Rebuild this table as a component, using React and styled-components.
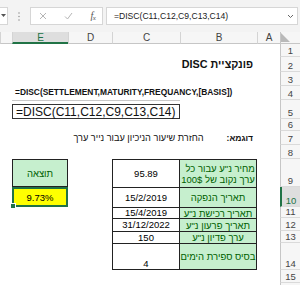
import React from "react";
import styled, { createGlobalStyle } from "styled-components";

const GlobalStyle = createGlobalStyle`
  html, body {
    margin: 0;
    padding: 0;
    background: #fff;
  }
  body {
    font-family: "Liberation Sans", "DejaVu Sans", Arial, sans-serif;
    width: 300px;
    height: 285px;
    overflow: hidden;
  }
`;

const Frame = styled.div`
  width: 300px;
  height: 285px;
  overflow: hidden;
  background: #fff;
`;

const FormulaBar = styled.div`
  height: 32px;
  box-sizing: border-box;
  padding-top: 7px;
  background: #f3f3f3;
  display: flex;
  align-items: flex-start;
`;

const NameBox = styled.div`
  width: 8px;
  height: 18px;
  box-sizing: border-box;
  background: #fff;
  border: 1px solid #d6d6d6;
  border-left: none;
  display: flex;
  align-items: center;
  padding-left: 1px;
`;

const Grip = styled.div`
  width: 22px;
  height: 18px;
  display: flex;
  align-items: center;
  justify-content: center;
`;

const ActionBox = styled.div`
  width: 73px;
  height: 18px;
  box-sizing: border-box;
  background: #fff;
  border: 1px solid #d6d6d6;
  display: flex;
  align-items: center;
  gap: 15px;
  padding-left: 7px;
`;

const ActionIcon = styled.span`
  width: 10px;
  display: flex;
  justify-content: center;
  align-items: center;
`;

const Fx = styled.span`
  font-family: "Liberation Serif", serif;
  font-style: italic;
  font-size: 10px;
  color: #555;
  letter-spacing: -0.5px;
  sub {
    font-size: 7px;
    vertical-align: -1px;
  }
`;

const FormulaInput = styled.div`
  width: 192px;
  height: 18px;
  margin-left: 3px;
  box-sizing: border-box;
  background: #fff;
  border: 1px solid #d6d6d6;
  display: flex;
  align-items: center;
  justify-content: space-between;
  padding: 0 3px 0 7px;
  font-size: 8.6px;
  color: #222;
`;

const Sheet = styled.div`
  display: grid;
  direction: rtl;
  grid-template-columns: 20px 23px 77px 68px 44px 56px 12px;
  grid-template-rows: 12px 13px 15px 14px 14px 19px 12px 14px 14px 28px 20px 11px 13px 12px 27px 13px 13px;
  background: #fff;
`;

const ColHead = styled.div`
  grid-row: 1;
  grid-column: ${(p) => p.$col};
  box-sizing: border-box;
  background: ${(p) => (p.$sel ? "#dedede" : "#f6f6f6")};
  color: ${(p) => (p.$sel ? "#217346" : "#444")};
  border-left: 1px solid #d4d4d4;
  border-bottom: ${(p) => (p.$sel ? "2px solid #217346" : "1px solid #c6c6c6")};
  font-size: 10px;
  display: flex;
  align-items: center;
  justify-content: center;
`;

const Corner = styled.div`
  grid-row: 1;
  grid-column: 1;
  box-sizing: border-box;
  background: #f6f6f6;
  border-left: 1px solid #c6c6c6;
  border-bottom: 1px solid #c6c6c6;
  display: flex;
  align-items: flex-end;
  justify-content: flex-end;
  padding: 0 7px 1px 0;
`;

const RowNum = styled.div`
  grid-column: 1;
  grid-row: ${(p) => p.$r + 1};
  box-sizing: border-box;
  background: ${(p) => (p.$sel ? "#dedede" : "#f6f6f6")};
  color: ${(p) => (p.$sel ? "#217346" : "#444")};
  border-bottom: 1px solid #dadada;
  border-left: ${(p) => (p.$sel ? "2px solid #217346" : "1px solid #c6c6c6")};
  font-size: 9.5px;
  line-height: 1;
  display: flex;
  align-items: flex-end;
  justify-content: center;
  padding-bottom: 1px;
`;

const TitleCell = styled.div`
  grid-row: 3;
  grid-column: 3 / 7;
  direction: rtl;
  display: flex;
  align-items: flex-end;
  padding: 0 4px 2px 0;
  font-size: 10.8px;
  font-weight: bold;
  color: #111;
  white-space: nowrap;
`;

const SyntaxCell = styled.div`
  grid-row: 5;
  grid-column: 3 / 7;
  direction: ltr;
  display: flex;
  align-items: flex-end;
  padding: 0 0 3px 3px;
  font-size: 8.4px;
  font-weight: bold;
  color: #111;
  white-space: nowrap;
`;

const FormulaBoxCell = styled.div`
  grid-row: 6;
  grid-column: 4 / 7;
  direction: ltr;
  border-top: 1px solid #c8c8c8;
  display: flex;
  align-items: flex-end;
`;

const FormulaBox = styled.div`
  width: 100%;
  height: 15px;
  box-sizing: border-box;
  border: 1.5px solid #333;
  display: flex;
  align-items: center;
  padding-left: 3px;
  font-size: 12px;
  color: #111;
  white-space: nowrap;
`;

const ExampleCell = styled.div`
  grid-row: 8;
  grid-column: 3 / 7;
  direction: rtl;
  display: flex;
  align-items: center;
  gap: 23px;
  padding-right: 4px;
  font-size: 9.2px;
  color: #111;
  white-space: nowrap;
`;

const ExampleLabel = styled.span`
  font-weight: bold;
  font-size: 8.5px;
`;

const ResultHead = styled.div`
  grid-row: 10;
  grid-column: 6;
  box-sizing: border-box;
  background: #c6efce;
  border: 1px solid #222;
  color: #006100;
  font-size: 9.5px;
  display: flex;
  align-items: center;
  justify-content: center;
`;

const ResultValue = styled.div`
  grid-row: 11;
  grid-column: 6;
  position: relative;
  box-sizing: border-box;
  background: #ffff00;
  border: 2px solid #217346;
  color: #000;
  font-size: 9.5px;
  display: flex;
  align-items: center;
  justify-content: center;
`;

const FillHandle = styled.span`
  position: absolute;
  left: -4px;
  bottom: -4px;
  width: 4px;
  height: 4px;
  background: #217346;
  border: 1px solid #fff;
`;

const CalcTable = styled.div`
  grid-row: 10 / 16;
  grid-column: 3 / 5;
  align-self: start;
  display: grid;
  direction: rtl;
  grid-template-columns: 76px 66px;
  grid-template-rows: 27px 19px 10px 12px 11px 25px;
  gap: 1px;
  padding: 1px;
  background: #222;
`;

const Label = styled.div`
  background: #c6efce;
  color: #006100;
  font-size: 9.5px;
  line-height: 11px;
  display: flex;
  align-items: center;
  justify-content: center;
  text-align: ${(p) => (p.$wrap ? "right" : "center")};
  white-space: nowrap;
  overflow: hidden;
`;

const Value = styled.div`
  background: #fff;
  color: #000;
  font-size: 9.5px;
  line-height: 10px;
  display: flex;
  align-items: ${(p) => (p.$bottom ? "flex-end" : "center")};
  justify-content: center;
`;

const columns = [
  { col: 2, name: "A" },
  { col: 3, name: "B" },
  { col: 4, name: "C" },
  { col: 5, name: "D" },
  { col: 6, name: "E", sel: true },
  { col: 7, name: "" },
];

const rows = [
  { r: 1, h: "1" },
  { r: 2, h: "2" },
  { r: 3, h: "3" },
  { r: 4, h: "4" },
  { r: 5, h: "5" },
  { r: 6, h: "6" },
  { r: 7, h: "7" },
  { r: 8, h: "8" },
  { r: 9, h: "9" },
  { r: 10, h: "10", sel: true },
  { r: 11, h: "11" },
  { r: 12, h: "12" },
  { r: 13, h: "13" },
  { r: 14, h: "14" },
  { r: 15, h: "15" },
  { r: 16, h: "" },
];

const tableRows = [
  { label: ["מחיר נ\"ע עבור כל", "ערך נקוב של 100$"], value: "95.89" },
  { label: ["תאריך הנפקה"], value: "15/2/2019" },
  { label: ["תאריך רכישת נ\"ע"], value: "15/4/2019" },
  { label: ["תאריך פרעון נ\"ע"], value: "31/12/2022" },
  { label: ["ערך פדיון נ\"ע"], value: "150" },
  { label: ["בסיס ספירת הימים"], value: "4", bottom: true },
];

function App() {
  return (
    <Frame>
      <GlobalStyle />
      <FormulaBar>
        <NameBox>
          <svg width="5" height="4" viewBox="0 0 5 4">
            <polygon points="0,0 5,0 2.5,3" fill="#555" />
          </svg>
        </NameBox>
        <Grip>
          <svg width="2" height="9" viewBox="0 0 2 9">
            <circle cx="1" cy="1" r="0.8" fill="#999" />
            <circle cx="1" cy="4.5" r="0.8" fill="#999" />
            <circle cx="1" cy="8" r="0.8" fill="#999" />
          </svg>
        </Grip>
        <ActionBox>
          <ActionIcon>
            <svg width="8" height="8" viewBox="0 0 8 8">
              <path d="M1 1 L7 7 M7 1 L1 7" stroke="#b5b5b5" strokeWidth="1" />
            </svg>
          </ActionIcon>
          <ActionIcon>
            <svg width="9" height="8" viewBox="0 0 9 8">
              <path d="M1 4.5 L3.5 7 L8 1" stroke="#b5b5b5" strokeWidth="1" fill="none" />
            </svg>
          </ActionIcon>
          <ActionIcon>
            <Fx>
              f<sub>x</sub>
            </Fx>
          </ActionIcon>
        </ActionBox>
        <FormulaInput>
          <span>=DISC(C11,C12,C9,C13,C14)</span>
          <svg width="7" height="5" viewBox="0 0 7 5">
            <path d="M1 1 L3.5 3.5 L6 1" stroke="#666" strokeWidth="1" fill="none" />
          </svg>
        </FormulaInput>
      </FormulaBar>

      <Sheet>
        <Corner>
          <svg width="9" height="9" viewBox="0 0 9 9">
            <polygon points="0,0 0,9 9,9" fill="#b9b9b9" />
          </svg>
        </Corner>
        {columns.map((c) => (
          <ColHead key={c.col} $col={c.col} $sel={c.sel}>
            {c.name}
          </ColHead>
        ))}

        {rows.map((row) => (
          <RowNum key={row.r} $r={row.r} $sel={row.sel}>
            {row.h}
          </RowNum>
        ))}

        <TitleCell>פונקציית DISC</TitleCell>
        <SyntaxCell>=DISC(SETTLEMENT,MATURITY,FREQUANCY,[BASIS])</SyntaxCell>
        <FormulaBoxCell>
          <FormulaBox>=DISC(C11,C12,C9,C13,C14)</FormulaBox>
        </FormulaBoxCell>
        <ExampleCell>
          <ExampleLabel>דוגמא:</ExampleLabel>
          <span>החזרת שיעור הניכיון עבור נייר ערך</span>
        </ExampleCell>

        <ResultHead>תוצאה</ResultHead>
        <ResultValue>
          9.73%
          <FillHandle />
        </ResultValue>

        <CalcTable>
          {tableRows.map((row, i) => (
            <React.Fragment key={i}>
              <Label $wrap={row.label.length > 1}>
                <div>
                  {row.label.map((line, j) => (
                    <div key={j}>{line}</div>
                  ))}
                </div>
              </Label>
              <Value $bottom={row.bottom}>{row.value}</Value>
            </React.Fragment>
          ))}
        </CalcTable>
      </Sheet>
    </Frame>
  );
}

export default App;
